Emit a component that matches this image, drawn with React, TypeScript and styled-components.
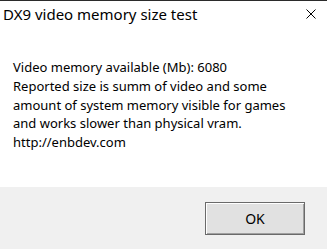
import { createGlobalStyle } from "styled-components";
import styled from "styled-components";

const GlobalStyle = createGlobalStyle`
  html, body {
    margin: 0;
    padding: 0;
    background: #ffffff;
  }
`;

const Window = styled.div`
  box-sizing: border-box;
  display: flex;
  flex-direction: column;
  width: 327px;
  height: 249px;
  border-top: 1px solid #2b2b2b;
  font-family: "Noto Sans", "Open Sans", sans-serif;
  color: #000000;
  overflow: hidden;
`;

const TitleBar = styled.div`
  align-items: center;
  display: flex;
  height: 26px;
  justify-content: space-between;
  padding-left: 3px;
`;

const Title = styled.span`
  font-size: 15px;
`;

const CloseButton = styled.div`
  align-items: center;
  display: flex;
  height: 26px;
  justify-content: center;
  width: 10px;
  margin-right: 11px;
`;

const Content = styled.div`
  flex: 1;
  padding: 31px 13px 0;
`;

const Message = styled.p`
  font-size: 13px;
  line-height: 18.75px;
  margin: 0;
`;

const Footer = styled.div`
  align-items: center;
  background: #f0f0f0;
  display: flex;
  height: 62px;
  justify-content: flex-end;
  padding-right: 22px;
`;

const OkButton = styled.button`
  box-sizing: border-box;
  width: 100px;
  height: 33px;
  background: #e1e1e1;
  border: 1px solid #6a6a6a;
  box-shadow: inset 1px 1px 0 #ffffff, inset -1px -1px 0 #a0a0a0;
  font-family: "Noto Sans", "Open Sans", sans-serif;
  font-size: 14px;
  color: #000000;
  padding: 0;
`;

export default function App() {
  return (
    <>
      <GlobalStyle />
      <Window>
        <TitleBar>
          <Title>DX9 video memory size test</Title>
          <CloseButton>
            <svg width="10" height="10" viewBox="0 0 10 10">
              <path d="M0.5 0.5 L9.5 9.5 M9.5 0.5 L0.5 9.5" stroke="#000" strokeWidth="1" />
            </svg>
          </CloseButton>
        </TitleBar>
        <Content>
          <Message>
            Video memory available (Mb): 6080
            <br />
            Reported size is summ of video and some
            <br />
            amount of system memory visible for games
            <br />
            and works slower than physical vram.
            <br />
            http://enbdev.com
          </Message>
        </Content>
        <Footer>
          <OkButton>OK</OkButton>
        </Footer>
      </Window>
    </>
  );
}
